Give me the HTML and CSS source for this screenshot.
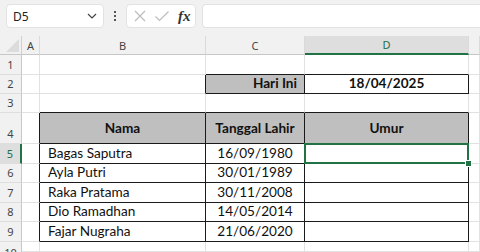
FILE: index.html
```html
<!DOCTYPE html>
<html>
<head>
<meta charset="utf-8">
<link rel="stylesheet" href="styles.css">
</head>
<body>
<div class="app">
  <div class="toolbar">
    <div class="namebox">
      <span class="ref">D5</span>
      <svg class="chev" width="10" height="6" viewBox="0 0 10 6"><path d="M1 1 L5 5 L9 1" fill="none" stroke="#444" stroke-width="1.2"/></svg>
    </div>
    <div class="dots"><i></i><i></i><i></i></div>
    <div class="fxbox">
      <svg width="14" height="14" viewBox="0 0 14 14"><path d="M2 2 L12 12 M12 2 L2 12" stroke="#bdbdbd" stroke-width="1.2" fill="none"/></svg>
      <svg width="16" height="14" viewBox="0 0 16 14"><path d="M1.5 7.5 L5.5 11.5 L14.5 2.5" stroke="#bdbdbd" stroke-width="1.2" fill="none"/></svg>
      <span class="fx">fx</span>
    </div>
    <div class="formula"></div>
  </div>
  <div class="grid">
    <!-- header row -->
    <div class="corner"><span class="tri"></span></div>
    <div class="ch">A</div>
    <div class="ch">B</div>
    <div class="ch">C</div>
    <div class="ch sel">D</div>
    <div class="ch"></div>
    <!-- row 1 -->
    <div class="rh">1</div>
    <div class="c"></div>
    <div class="c"></div>
    <div class="c bb"></div>
    <div class="c bb"></div>
    <div class="c"></div>
    <!-- row 2 -->
    <div class="rh">2</div>
    <div class="c"></div>
    <div class="c br"></div>
    <div class="c br bb gray bold right">Hari Ini</div>
    <div class="c br bb bold center">18/04/2025</div>
    <div class="c"></div>
    <!-- row 3 -->
    <div class="rh">3</div>
    <div class="c"></div>
    <div class="c bb"></div>
    <div class="c bb"></div>
    <div class="c bb"></div>
    <div class="c"></div>
    <!-- row 4 -->
    <div class="rh">4</div>
    <div class="c br"></div>
    <div class="c br bb gray bold center mid">Nama</div>
    <div class="c br bb gray bold center mid">Tanggal Lahir</div>
    <div class="c br bb gray bold center mid">Umur</div>
    <div class="c"></div>
    <!-- row 5 -->
    <div class="rh rsel">5</div>
    <div class="c br"></div>
    <div class="c br bb name">Bagas Saputra</div>
    <div class="c br bb center">16/09/1980</div>
    <div class="c br bb active"><span class="handle"></span></div>
    <div class="c"></div>
    <!-- row 6 -->
    <div class="rh">6</div>
    <div class="c br"></div>
    <div class="c br bb name">Ayla Putri</div>
    <div class="c br bb center">30/01/1989</div>
    <div class="c br bb"></div>
    <div class="c"></div>
    <!-- row 7 -->
    <div class="rh">7</div>
    <div class="c br"></div>
    <div class="c br bb name">Raka Pratama</div>
    <div class="c br bb center">30/11/2008</div>
    <div class="c br bb"></div>
    <div class="c"></div>
    <!-- row 8 -->
    <div class="rh">8</div>
    <div class="c br"></div>
    <div class="c br bb name">Dio Ramadhan</div>
    <div class="c br bb center">14/05/2014</div>
    <div class="c br bb"></div>
    <div class="c"></div>
    <!-- row 9 -->
    <div class="rh">9</div>
    <div class="c br"></div>
    <div class="c br bb name">Fajar Nugraha</div>
    <div class="c br bb center">21/06/2020</div>
    <div class="c br bb"></div>
    <div class="c"></div>
    <!-- row 10 -->
    <div class="rh cut">10</div>
    <div class="c"></div>
    <div class="c"></div>
    <div class="c"></div>
    <div class="c"></div>
    <div class="c"></div>
  </div>
</div>
</body>
</html>
```
FILE: styles.css
```css
html, body {
  margin: 0;
  padding: 0;
  background: #ffffff;
}
.app {
  width: 480px;
  height: 252px;
  overflow: hidden;
  font-family: Lato, "Liberation Sans", sans-serif;
}
.toolbar {
  height: 36px;
  box-sizing: border-box;
  background: #f1f1f1;
  display: flex;
  align-items: flex-start;
  padding: 4px 0 0 6px;
}
.namebox {
  width: 98px;
  height: 24px;
  box-sizing: border-box;
  background: #fff;
  border: 1px solid #e2e2e2;
  border-radius: 4px;
  display: flex;
  align-items: center;
  justify-content: space-between;
  padding: 0 6px 0 6px;
}
.ref {
  font-family: "Noto Sans", sans-serif;
  font-size: 12px;
  color: #222;
}
.dots {
  width: 22px;
  height: 24px;
  display: flex;
  flex-direction: column;
  align-items: center;
  justify-content: center;
  gap: 2px;
}
.dots i {
  width: 2px;
  height: 2px;
  background: #555;
  display: block;
}
.fxbox {
  width: 70px;
  height: 24px;
  box-sizing: border-box;
  background: #fff;
  border: 1px solid #e2e2e2;
  border-radius: 4px;
  display: flex;
  align-items: center;
  padding: 0 4px 0 6px;
  gap: 7px;
}
.fx {
  font-family: "Liberation Serif", serif;
  font-style: italic;
  font-weight: bold;
  font-size: 15px;
  color: #333;
  margin-left: 1px;
}
.formula {
  flex: 1;
  height: 24px;
  box-sizing: border-box;
  margin-left: 6px;
  background: #fff;
  border: 1px solid #e2e2e2;
  border-right: none;
  border-radius: 4px 0 0 4px;
}
.grid {
  display: grid;
  grid-template-columns: 22px 18px 166px 99px 164px 11px;
  grid-template-rows: 19px 20px 19px 19px 31px 20px 19px 20px 19px 20px 10px;
}
.grid > div {
  box-sizing: border-box;
  overflow: hidden;
}
.corner {
  background: #f1f1f1;
  border-right: 1px solid #d0d0d0;
  border-bottom: 1px solid #c8c8c8;
  position: relative;
}
.tri {
  position: absolute;
  right: 2px;
  bottom: 2px;
  width: 0;
  height: 0;
  border-left: 13px solid transparent;
  border-bottom: 13px solid #dcdcdc;
}
.ch {
  background: #f1f1f1;
  border-right: 1px solid #dadada;
  border-bottom: 1px solid #c6c6c6;
  font-family: "Noto Sans", sans-serif;
  font-size: 11px;
  color: #444;
  display: flex;
  align-items: center;
  justify-content: center;
}
.ch.sel {
  background: #dedede;
  color: #1e6e46;
  border-bottom: 2px solid #217346;
}
.rh {
  background: #f1f1f1;
  border-right: 1px solid #c8c8c8;
  border-bottom: 1px solid #dedede;
  font-family: "Noto Sans", sans-serif;
  font-size: 11px;
  color: #444;
  display: flex;
  align-items: flex-end;
  justify-content: center;
  padding-bottom: 1px;
  line-height: 16px;
}
.rh.cut {
  align-items: flex-start;
  padding: 3px 0 0 0;
  border-bottom: none;
}
.rh.rsel {
  background: #dedede;
  color: #1e6e46;
  border-right: 2px solid #217346;
}
.c {
  border-right: 1px solid #e1e1e1;
  border-bottom: 1px solid #e1e1e1;
  font-size: 13.6px;
  color: #111;
  display: flex;
  align-items: flex-end;
  padding: 0 3px 1px 3px;
  white-space: nowrap;
  line-height: 17px;
}
.c.br { border-right-color: #1a1a1a; }
.c.bb { border-bottom-color: #1a1a1a; }
.c.gray { background: #bfbfbf; }
.c.bold { font-weight: bold; }
.c.right { justify-content: flex-end; padding-right: 7px; }
.c.center { justify-content: center; }
.c.mid { align-items: center; padding-bottom: 0; }
.c.name { padding-left: 8px; }
.grid > .c.active {
  position: relative;
  overflow: visible;
}
.c.active::after {
  content: "";
  position: absolute;
  left: -1px;
  top: -1px;
  right: -1px;
  bottom: -1px;
  border: 2px solid #217346;
}
.handle {
  position: absolute;
  right: -4px;
  bottom: -4px;
  width: 5px;
  height: 5px;
  background: #217346;
  border: 1px solid #fff;
  z-index: 2;
}
```
